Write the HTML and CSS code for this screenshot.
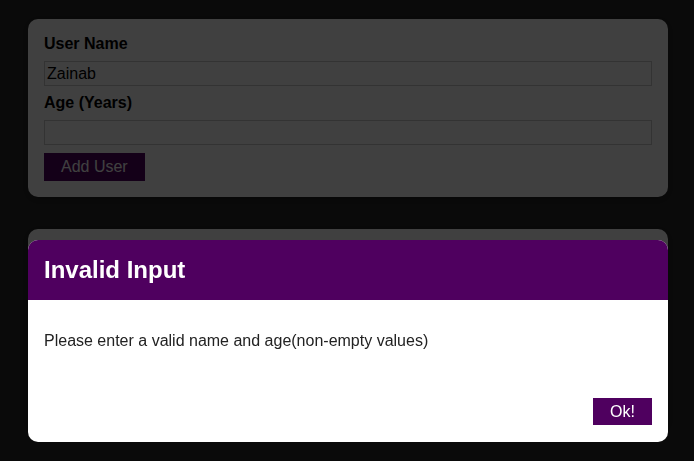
FILE: index.html
```html
<!DOCTYPE html>
<html lang="en">
<head>
<meta charset="utf-8">
<title>Add User</title>
<link rel="stylesheet" href="styles.css">
</head>
<body>
<main class="page">
  <section class="card form-card">
    <form class="user-form">
      <label class="field-label" for="username">User Name</label>
      <input class="field-input" id="username" type="text" value="Zainab">
      <label class="field-label" for="age">Age (Years)</label>
      <input class="field-input" id="age" type="number">
      <button class="btn" type="button">Add User</button>
    </form>
  </section>
  <section class="card list-card">
    <ul class="user-list"></ul>
  </section>
</main>
<div class="backdrop"></div>
<div class="modal">
  <header class="modal-header">
    <h2 class="modal-title">Invalid Input</h2>
  </header>
  <div class="modal-content">
    <p class="modal-text">Please enter a valid name and age(non-empty values)</p>
  </div>
  <footer class="modal-actions">
    <button class="btn" type="button">Ok!</button>
  </footer>
</div>
</body>
</html>
```
FILE: styles.css
```css
* { box-sizing: border-box; }

html, body {
  margin: 0;
  padding: 0;
}

body {
  font-family: "Liberation Sans", Arial, sans-serif;
  background: #292929;
  color: #000;
  height: 461px;
  overflow: hidden;
}

.page {
  padding-top: 19px;
}

.card {
  background: #fff;
  border-radius: 10px;
  box-shadow: 0 2px 8px rgba(0, 0, 0, 0.26);
  width: 640px;
  margin: 0 0 32px calc(50% - 319px);
}

.form-card {
  padding: 16px;
}

.list-card {
  height: 200px;
}

.user-form {
  margin: 0;
}

.field-label {
  display: block;
  font-weight: bold;
  font-size: 16px;
  line-height: 18px;
  margin-bottom: 8px;
}

.field-input {
  display: block;
  width: 100%;
  font: inherit;
  font-size: 16px;
  line-height: 18px;
  height: 25px;
  border: 1px solid #ccc;
  padding: 2px 2px;
  margin: 0 0 8px;
  color: #000;
  background: #fff;
}

.btn {
  font: inherit;
  font-size: 16px;
  line-height: 18px;
  border: 1px solid #4f005f;
  background: #4f005f;
  color: #fff;
  padding: 4px 16px;
  height: 28px;
  cursor: pointer;
}

.backdrop {
  position: fixed;
  top: 0;
  left: 0;
  width: 100%;
  height: 100%;
  background: rgba(0, 0, 0, 0.75);
  z-index: 10;
}

.modal {
  position: fixed;
  top: 240px;
  left: calc(50% - 319px);
  width: 640px;
  background: #fff;
  border-radius: 10px;
  overflow: hidden;
  z-index: 100;
}

.modal-header {
  background: #4f005f;
  padding: 16px;
  height: 60px;
}

.modal-title {
  margin: 0;
  color: #fff;
  font-size: 24px;
  line-height: 28px;
  font-weight: bold;
}

.modal-content {
  padding: 16px;
}

.modal-text {
  margin: 16px 0;
  font-size: 16px;
  line-height: 18px;
  color: #222;
}

.modal-actions {
  padding: 16px 16px 17px;
  display: flex;
  justify-content: flex-end;
}

.modal-actions .btn {
  height: 27px;
  padding: 3px 16px;
}
```
